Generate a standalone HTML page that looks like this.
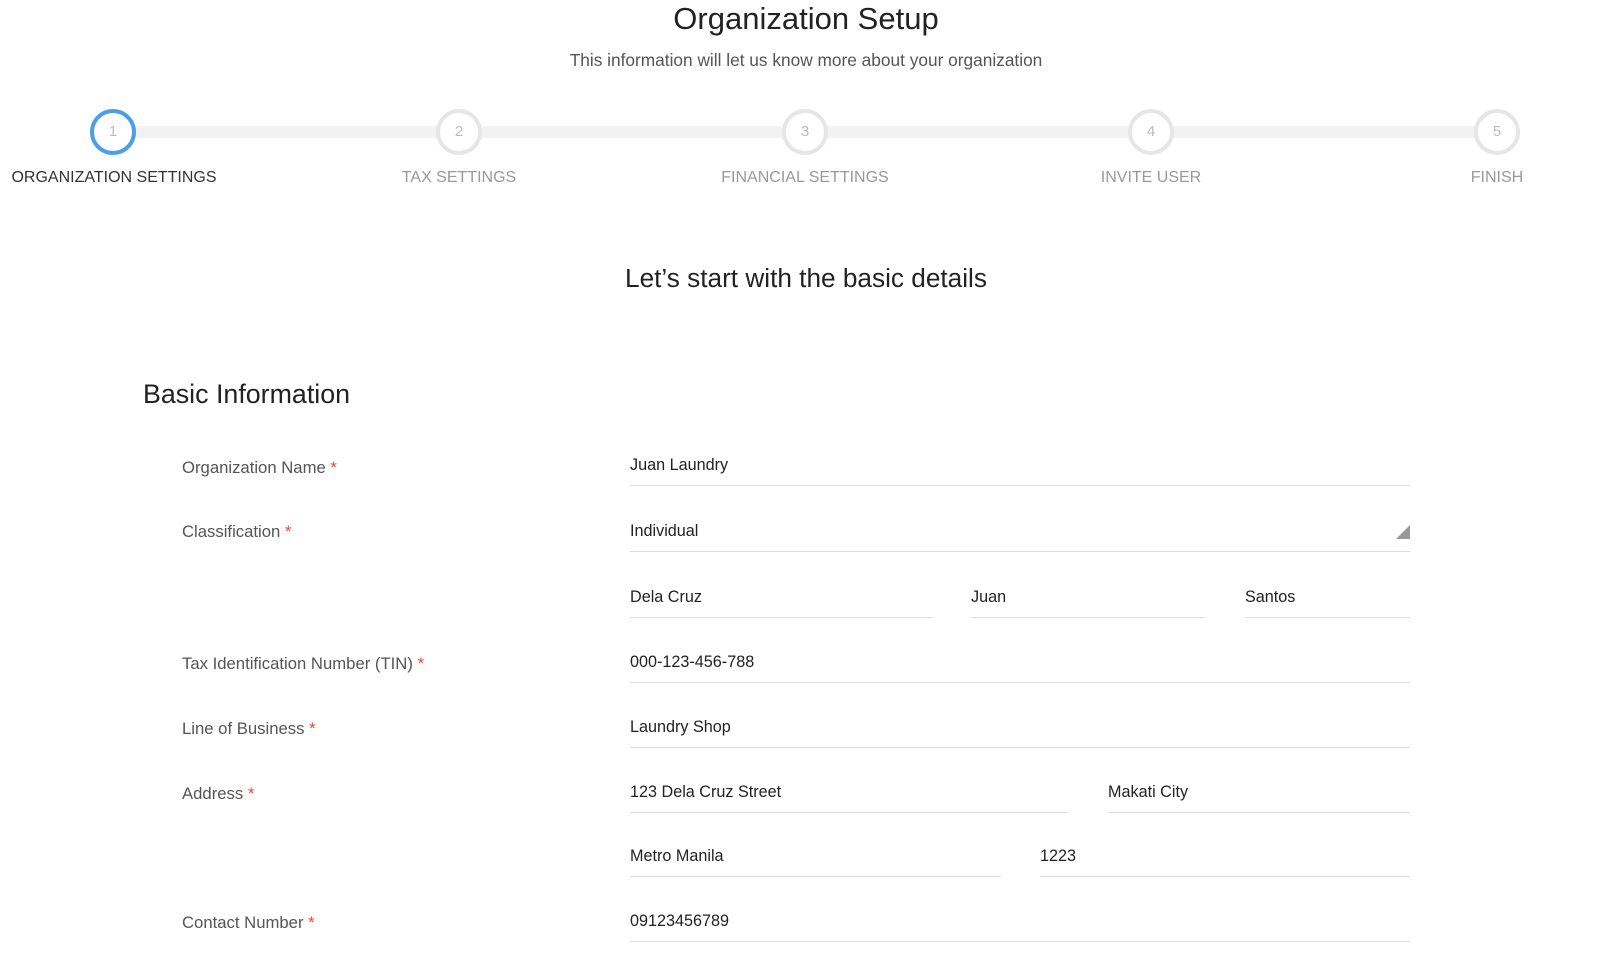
<!DOCTYPE html>
<html><head><meta charset="utf-8"><style>
body{margin:0;width:1600px;height:980px;background:#fff;font-family:"Liberation Sans",Arial,sans-serif;position:relative;overflow:hidden}
.a{position:absolute;white-space:nowrap}
.c{transform:translateX(-50%)}
.circ{position:absolute;width:38px;height:38px;border:4px solid #e6e6e6;border-radius:50%;background:#fff;color:#bbb;font-size:15px;text-align:center;line-height:38px;transform:translate(-50%,-50%)}
.sl{position:absolute;top:169px;font-size:16px;color:#999;transform:translateX(-50%)}
.lbl{position:absolute;left:182px;font-size:16.7px;color:#555}
.lbl b{color:#f44336;font-weight:normal}
.f{position:absolute;border-bottom:1px solid #ddd;font-size:16.2px;color:#222;height:31px;line-height:22px}
</style></head><body>
<div class="a c" style="left:806px;top:1px;font-size:31px;color:#222">Organization Setup</div>
<div class="a c" style="left:806px;top:50px;font-size:17.3px;color:#555">This information will let us know more about your organization</div>
<div class="a" style="left:113px;top:126px;width:1384px;height:12px;background:#f2f2f2"></div>
<div class="circ" style="left:113px;top:132px;border-color:#4a9fe8">1</div>
<div class="circ" style="left:459px;top:132px">2</div>
<div class="circ" style="left:805px;top:132px">3</div>
<div class="circ" style="left:1151px;top:132px">4</div>
<div class="circ" style="left:1497px;top:132px">5</div>
<div class="sl" style="left:114px;color:#333">ORGANIZATION SETTINGS</div>
<div class="sl" style="left:459px">TAX SETTINGS</div>
<div class="sl" style="left:805px">FINANCIAL SETTINGS</div>
<div class="sl" style="left:1151px">INVITE USER</div>
<div class="sl" style="left:1497px">FINISH</div>
<div class="a c" style="left:806px;top:263px;font-size:26.2px;color:#222">Let’s start with the basic details</div>
<div class="a" style="left:143px;top:379px;font-size:26.8px;color:#222">Basic Information</div>

<div class="lbl" style="top:458px">Organization Name <b>*</b></div>
<div class="lbl" style="top:522px">Classification <b>*</b></div>
<div class="lbl" style="top:654px">Tax Identification Number (TIN) <b>*</b></div>
<div class="lbl" style="top:719px">Line of Business <b>*</b></div>
<div class="lbl" style="top:784px">Address <b>*</b></div>
<div class="lbl" style="top:913px">Contact Number <b>*</b></div>

<div class="f" style="left:630px;width:780px;top:454px">Juan Laundry</div>
<div class="f" style="left:630px;width:780px;top:520px">Individual</div>
<div class="a" style="left:1396px;top:525px;width:0;height:0;border-left:14px solid transparent;border-bottom:14px solid #999"></div>
<div class="f" style="left:630px;width:303px;top:586px">Dela Cruz</div>
<div class="f" style="left:971px;width:234px;top:586px">Juan</div>
<div class="f" style="left:1245px;width:165px;top:586px">Santos</div>
<div class="f" style="left:630px;width:780px;top:651px">000-123-456-788</div>
<div class="f" style="left:630px;width:780px;top:716px">Laundry Shop</div>
<div class="f" style="left:630px;width:438px;top:781px">123 Dela Cruz Street</div>
<div class="f" style="left:1108px;width:302px;top:781px">Makati City</div>
<div class="f" style="left:630px;width:371px;top:845px">Metro Manila</div>
<div class="f" style="left:1040px;width:370px;top:845px">1223</div>
<div class="f" style="left:630px;width:780px;top:910px">09123456789</div>
</body></html>
